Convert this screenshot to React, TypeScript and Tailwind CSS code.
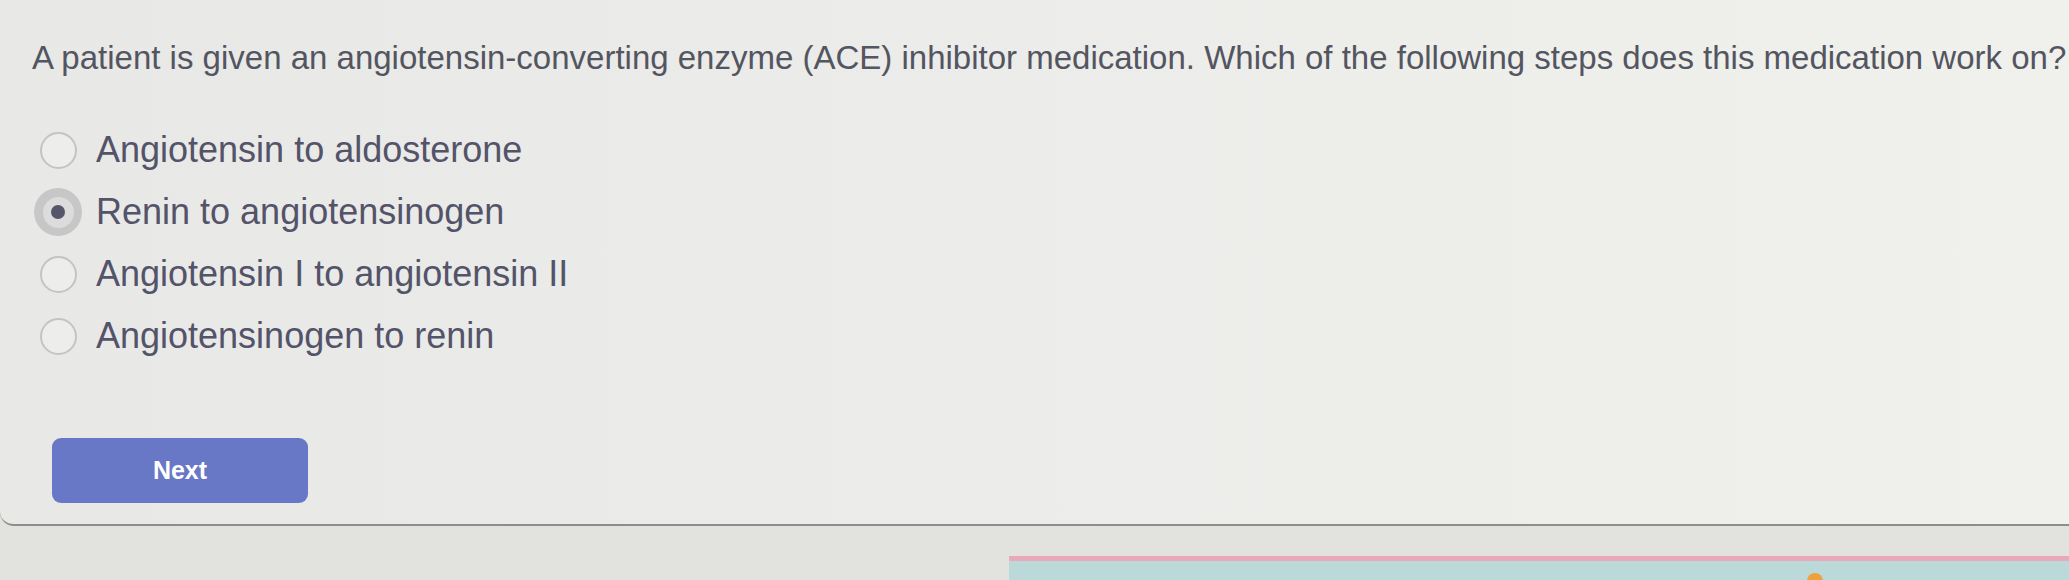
import React from 'react'

const options = [
  'Angiotensin to aldosterone',
  'Renin to angiotensinogen',
  'Angiotensin I to angiotensin II',
  'Angiotensinogen to renin',
]

function Radio({ checked }: { checked: boolean }) {
  if (checked) {
    // selected state with the grey focus halo
    return (
      <span className="flex h-[48px] w-[48px] items-center justify-center rounded-full bg-[#c7c7c7]">
        <span className="flex h-[31px] w-[31px] items-center justify-center rounded-full bg-[#dcdcdc]">
          <span className="h-[14px] w-[14px] rounded-full bg-[#55566a]" />
        </span>
      </span>
    )
  }
  return <span className="h-[37px] w-[37px] rounded-full border-2 border-[#c4c4c4] bg-[#ededeb]" />
}

export default function App() {
  const selected = 1

  return (
    <div className="flex h-[580px] w-[2069px] flex-col overflow-hidden bg-[#e2e2de] font-['Liberation_Sans',Arial,sans-serif]">
      {/* question card */}
      <div className="h-[526px] shrink-0 rounded-bl-[14px] border-b-2 border-[#8d8d8b] bg-linear-to-r from-[#e8e8e6] via-[#ececea] to-[#f0f0ec] pl-[32px]">
        <p className="whitespace-nowrap pt-[38px] text-[33px] leading-[40px] text-[#535560]">
          A patient is given an angiotensin-converting enzyme (ACE) inhibitor medication. Which of the following steps does this medication work on?
        </p>

        <ul className="mt-[41px] flex flex-col">
          {options.map((label, i) => (
            <li key={label} className="flex h-[62px] items-center">
              <span className="flex w-[52px] justify-center">
                <Radio checked={i === selected} />
              </span>
              <span className="ml-[12px] text-[36px] leading-none text-[#535369]">{label}</span>
            </li>
          ))}
        </ul>

        <button className="ml-[20px] mt-[71px] flex h-[65px] w-[256px] items-center justify-center rounded-[9px] bg-[#6877c6] text-[25px] font-bold text-white">
          Next
        </button>
      </div>

      {/* strip of the next panel showing underneath */}
      <div className="flex flex-1 items-end">
        <div className="flex-1" />
        <div className="relative h-[24px] w-[1060px] overflow-hidden border-t-[5px] border-[#e9a9ba] bg-[#bcd9da]">
          <span className="absolute left-[798px] top-[12px] h-[16px] w-[16px] rounded-full bg-[#f0a23a]" />
        </div>
      </div>
    </div>
  )
}
